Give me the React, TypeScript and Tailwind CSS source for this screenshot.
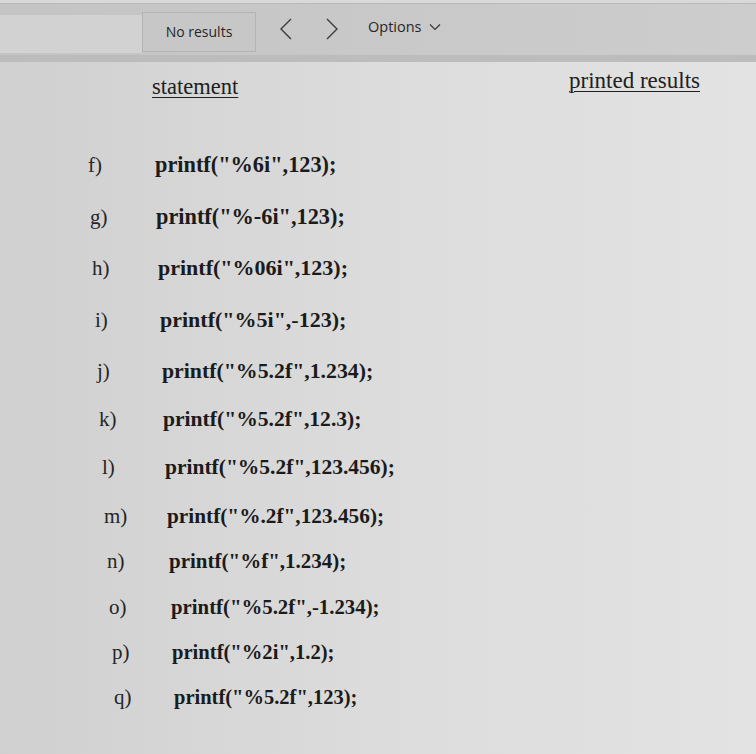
import React from 'react'

type Row = {
  label: string
  code: string
  h: string
  pl: string
  lw: string
  size: string
}

// the photo is taken at an angle, so each row drifts right and shrinks a bit
const rows: Row[] = [
  { label: 'f)', code: 'printf("%6i",123);', h: 'h-[52px]', pl: 'pl-[88px]', lw: 'w-[67px]', size: 'text-[22.3px]' },
  { label: 'g)', code: 'printf("%-6i",123);', h: 'h-[51px]', pl: 'pl-[90px]', lw: 'w-[66px]', size: 'text-[22.3px]' },
  { label: 'h)', code: 'printf("%06i",123);', h: 'h-[52px]', pl: 'pl-[92px]', lw: 'w-[66px]', size: 'text-[22px]' },
  { label: 'i)', code: 'printf("%5i",-123);', h: 'h-[51px]', pl: 'pl-[95px]', lw: 'w-[65px]', size: 'text-[22px]' },
  { label: 'j)', code: 'printf("%5.2f",1.234);', h: 'h-[48px]', pl: 'pl-[97px]', lw: 'w-[65px]', size: 'text-[21.8px]' },
  { label: 'k)', code: 'printf("%5.2f",12.3);', h: 'h-[48px]', pl: 'pl-[99px]', lw: 'w-[64px]', size: 'text-[21.6px]' },
  { label: 'l)', code: 'printf("%5.2f",123.456);', h: 'h-[49px]', pl: 'pl-[102px]', lw: 'w-[63px]', size: 'text-[21.5px]' },
  { label: 'm)', code: 'printf("%.2f",123.456);', h: 'h-[45px]', pl: 'pl-[104px]', lw: 'w-[63px]', size: 'text-[21.3px]' },
  { label: 'n)', code: 'printf("%f",1.234);', h: 'h-[46px]', pl: 'pl-[107px]', lw: 'w-[62px]', size: 'text-[21px]' },
  { label: 'o)', code: 'printf("%5.2f",-1.234);', h: 'h-[45px]', pl: 'pl-[109px]', lw: 'w-[62px]', size: 'text-[20.8px]' },
  { label: 'p)', code: 'printf("%2i",1.2);', h: 'h-[45px]', pl: 'pl-[112px]', lw: 'w-[60px]', size: 'text-[20.6px]' },
  { label: 'q)', code: 'printf("%5.2f",123);', h: 'h-[45px]', pl: 'pl-[114px]', lw: 'w-[60px]', size: 'text-[20.5px]' },
]

function Chevron({ dir }: { dir: 'left' | 'right' | 'down' }) {
  if (dir === 'down') {
    return (
      <svg width="12" height="8" viewBox="0 0 12 8" fill="none" stroke="#3a3a3a" strokeWidth="1.2">
        <polyline points="1,1.5 6,6.5 11,1.5" />
      </svg>
    )
  }
  return (
    <svg width="12" height="22" viewBox="0 0 12 22" fill="none" stroke="#3a3a3a" strokeWidth="1.4">
      {dir === 'left' ? <polyline points="11,1 1,11 11,21" /> : <polyline points="1,1 11,11 1,21" />}
    </svg>
  )
}

export default function App() {
  return (
    <div className="w-[756px] h-[754px] overflow-hidden bg-linear-to-r from-[#d0d0d0] via-[#dcdcdc] to-[#e3e3e3] font-['Liberation_Serif',serif]">
      {/* toolbar */}
      <div className="h-[4px] bg-[#d9d9d9] border-b border-[#b9b9b9]" />
      <div className="h-[51px] bg-linear-to-r from-[#c4c4c4] to-[#cdcdcd] flex items-start font-['Open_Sans',sans-serif] text-[#262626]">
        <div className="w-[142px] h-[38px] mt-[11px] bg-[#d2d2d2]" />
        <div className="w-[114px] h-[40px] mt-[8px] border border-[#b4b4b4] bg-[#c7c7c7] flex items-center justify-center text-[14px] pb-[1px]">
          No results
        </div>
        <div className="ml-[24px] mt-[14px] flex items-center gap-[34px]">
          <Chevron dir="left" />
          <Chevron dir="right" />
        </div>
        <div className="ml-[30px] mt-[12px] flex items-center gap-[7px] text-[14.5px]">
          <span>Options</span>
          <Chevron dir="down" />
        </div>
      </div>
      <div className="h-[7px] bg-[#bcbcbc]" />

      {/* headers */}
      <div className="h-[60px] flex items-start text-[#202020]">
        <span className="ml-[152px] mt-[8px] text-[22.5px] underline underline-offset-[3px] decoration-1">statement</span>
        <span className="ml-auto mr-[56px] mt-[2px] text-[23px] underline underline-offset-[3px] decoration-1">printed results</span>
      </div>
      <div className="h-[30px]" />

      {/* rows */}
      <div className="flex flex-col">
        {rows.map((r) => (
          <div key={r.label} className={`${r.h} ${r.pl} flex items-start`}>
            <span className={`${r.lw} text-[21px] leading-[26px] text-[#262626]`}>{r.label}</span>
            <span className={`${r.size} leading-[26px] font-bold text-[#1b1b1b] whitespace-pre`}>{r.code}</span>
          </div>
        ))}
      </div>
    </div>
  )
}
